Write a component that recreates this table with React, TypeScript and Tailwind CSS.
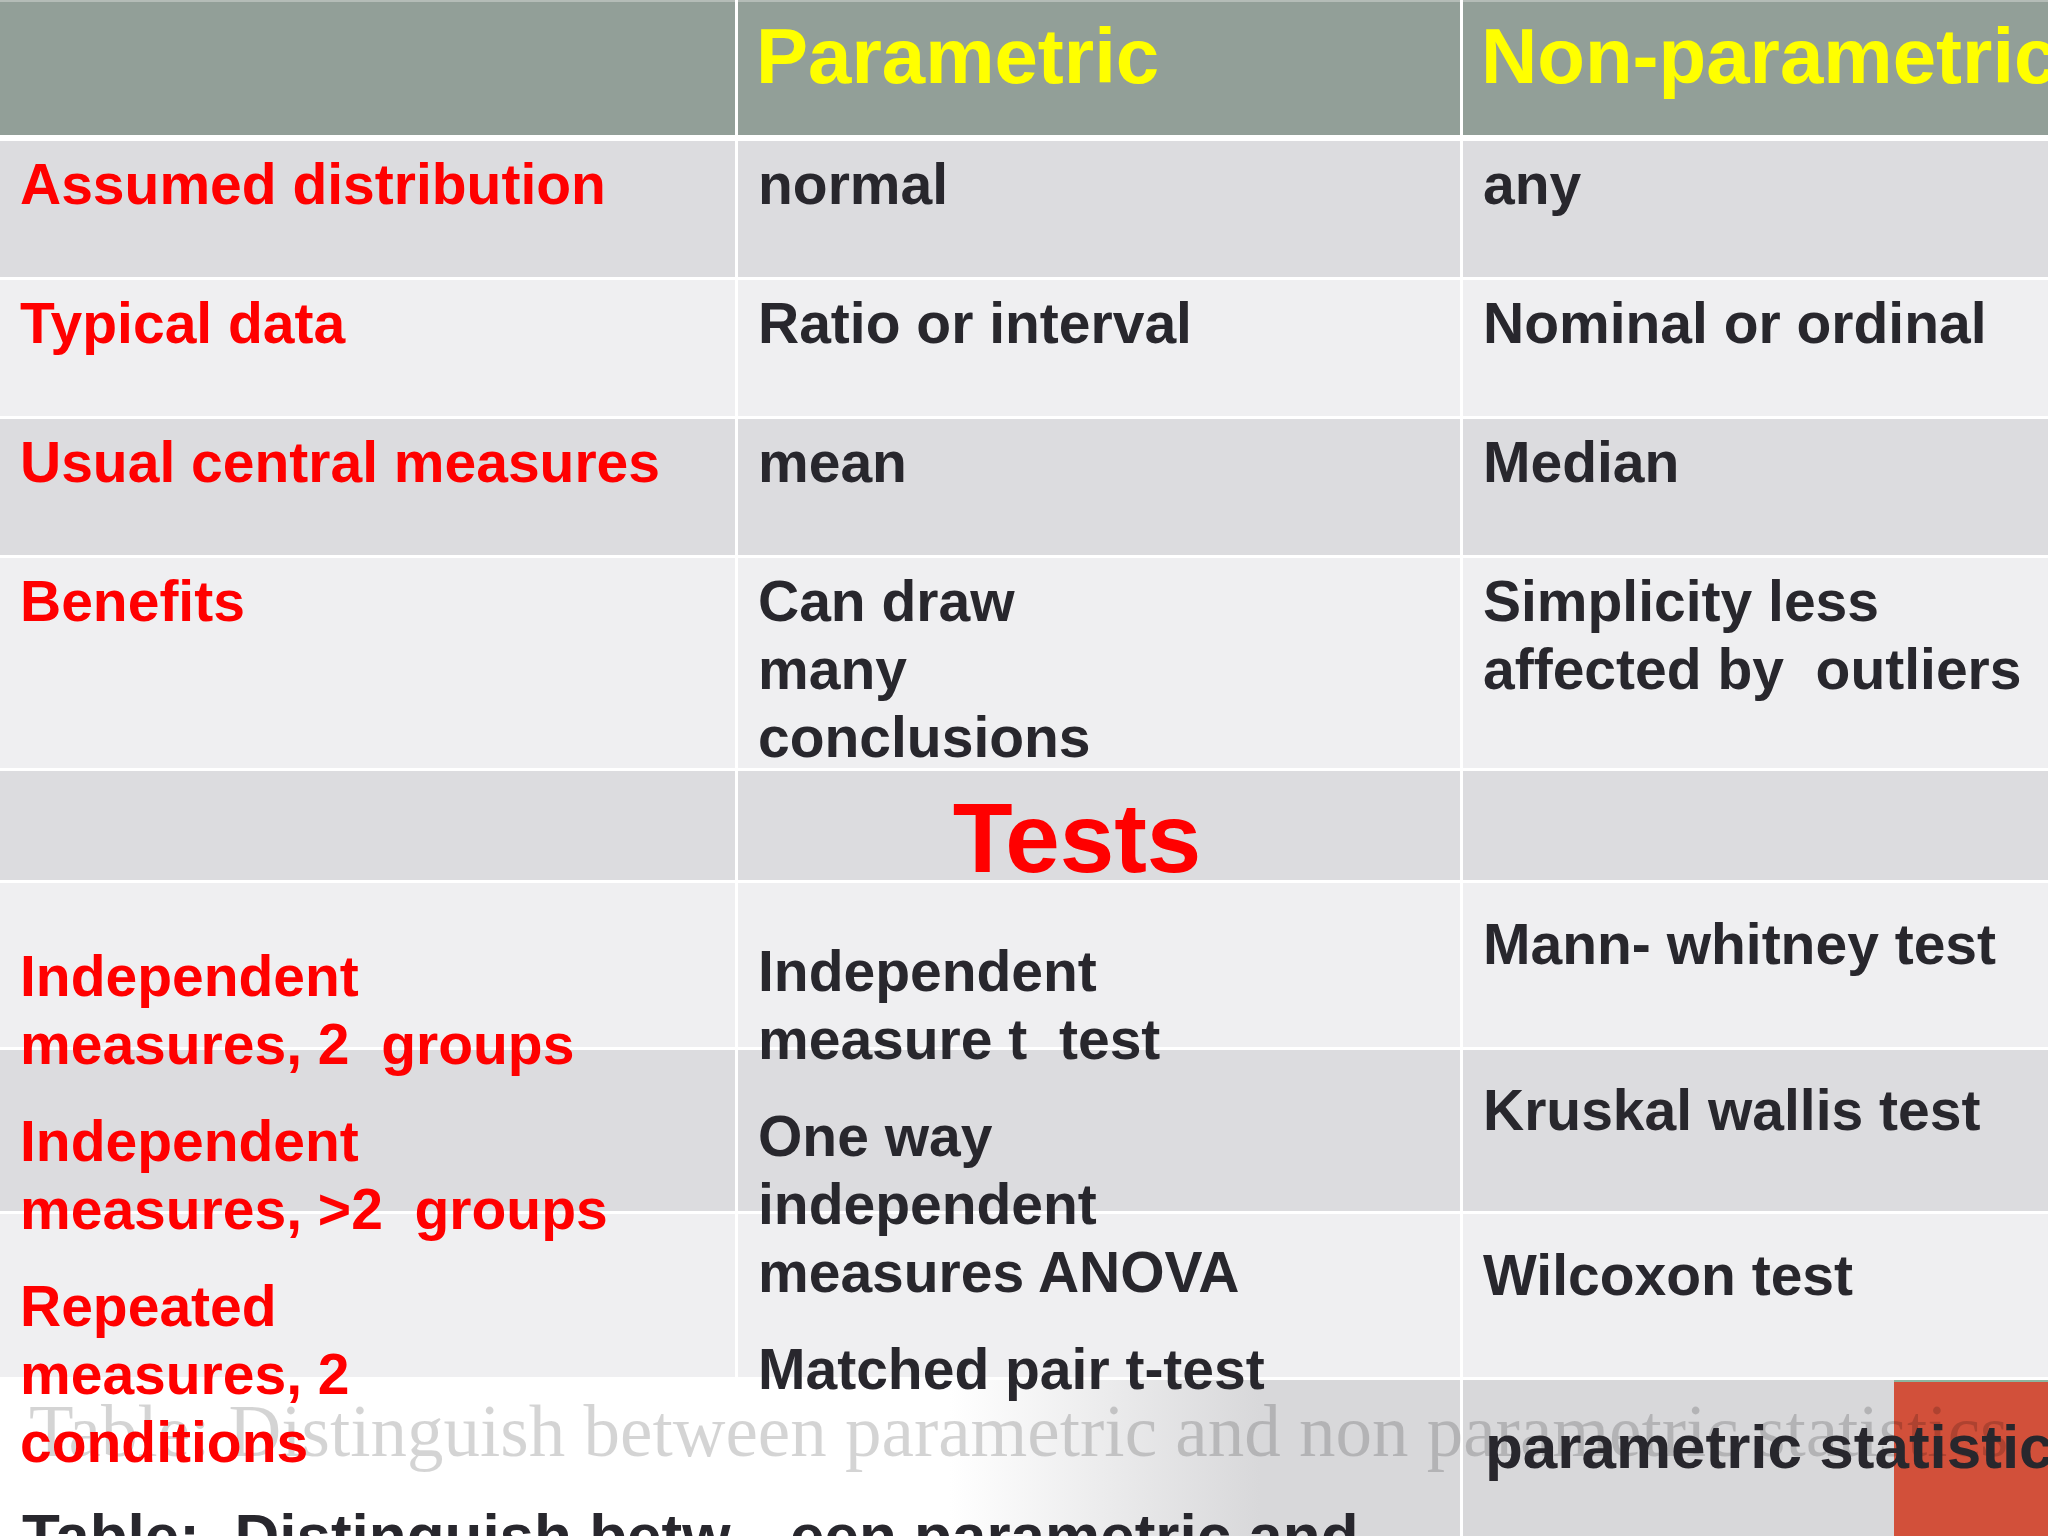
import React from "react";

const DARK = "text-[#28272d]";
const RED = "text-[#ff0000]";

function BodyCell({
  bg,
  color,
  children,
  pt = "pt-[9px]",
}: {
  bg: string;
  color: string;
  children?: React.ReactNode;
  pt?: string;
}) {
  return (
    <div className={`${bg} ${color} ${pt} pl-[20px] text-[57px] leading-[68px] whitespace-pre`}>
      {children}
    </div>
  );
}

export default function App() {
  const dark = "bg-[#dcdcdf]";
  const light = "bg-[#efeff1]";
  return (
    <div className="relative w-[2048px] h-[1536px] overflow-hidden bg-white font-['Liberation_Sans',Arial,sans-serif] font-bold">
      <div className="grid grid-cols-[735px_722px_585px] gap-x-[3px] gap-y-[3px] grid-rows-[138px_136px_136px_136px_210px_109px_164px_161px_163px_156px]">
        {/* Header */}
        <div className="h-[135px] bg-[#929f98] border-t-2 border-[#b4bcb7]" />
        <div className="h-[135px] bg-[#929f98] border-t-2 border-[#b4bcb7] pl-[18px] pt-[15px] text-[78px] leading-none text-[#ffff00] whitespace-nowrap">
          Parametric
        </div>
        <div className="h-[135px] bg-[#929f98] border-t-2 border-[#b4bcb7] pl-[18px] pt-[15px] text-[78px] leading-none text-[#ffff00] whitespace-nowrap">
          Non-parametric
        </div>

        {/* Row 1 */}
        <BodyCell bg={dark} color={RED}>Assumed distribution</BodyCell>
        <BodyCell bg={dark} color={DARK}>normal</BodyCell>
        <BodyCell bg={dark} color={DARK}>any</BodyCell>

        {/* Row 2 */}
        <BodyCell bg={light} color={RED}>Typical data</BodyCell>
        <BodyCell bg={light} color={DARK}>Ratio or interval</BodyCell>
        <BodyCell bg={light} color={DARK}>Nominal or ordinal</BodyCell>

        {/* Row 3 */}
        <BodyCell bg={dark} color={RED}>Usual central measures</BodyCell>
        <BodyCell bg={dark} color={DARK}>mean</BodyCell>
        <BodyCell bg={dark} color={DARK}>Median</BodyCell>

        {/* Row 4 */}
        <BodyCell bg={light} color={RED}>Benefits</BodyCell>
        <BodyCell bg={light} color={DARK}>
          <div>Can draw</div>
          <div>many</div>
          <div>conclusions</div>
        </BodyCell>
        <BodyCell bg={light} color={DARK}>
          <div>Simplicity less</div>
          <div>affected by  outliers</div>
        </BodyCell>

        {/* Tests row */}
        <div className={dark} />
        <div className={`${dark} ${RED} pt-[18px] pr-[44px] text-center text-[98px] leading-none`}>Tests</div>
        <div className={dark} />

        {/* Test rows: backgrounds + column 3 */}
        <div className={`${light} col-start-1 row-start-7`} />
        <div className={`${light} col-start-2 row-start-7`} />
        <div className={`${light} ${DARK} col-start-3 row-start-7 pl-[20px] pt-[27px] text-[57px] leading-[68px] whitespace-pre`}>
          Mann- whitney test
        </div>

        <div className={`${dark} col-start-1 row-start-8`} />
        <div className={`${dark} col-start-2 row-start-8`} />
        <div className={`${dark} ${DARK} col-start-3 row-start-8 pl-[20px] pt-[26px] text-[57px] leading-[68px] whitespace-pre`}>
          Kruskal wallis test
        </div>

        <div className={`${light} col-start-1 row-start-9`} />
        <div className={`${light} col-start-2 row-start-9`} />
        <div className={`${light} ${DARK} col-start-3 row-start-9 pl-[20px] pt-[27px] text-[57px] leading-[68px] whitespace-pre`}>
          Wilcoxon test
        </div>

        {/* Bottom band (caption area) */}
        <div className="col-start-1 col-span-2 row-start-10 bg-[linear-gradient(to_right,#ffffff_950px,#d8d8da_1260px)]" />
        <div className="col-start-3 row-start-10 flex">
          <div className="flex-1 bg-[#d8d8da]" />
          <div className="w-[154px] bg-[#d2503a] border-t-2 border-[#8db59f]" />
        </div>

        {/* Ghost caption */}
        <div className="col-start-1 col-span-3 row-start-10 relative z-10 pl-[29px] pt-[15px] font-['Liberation_Serif','Times_New_Roman',serif] font-normal text-[73px] leading-none text-black/[0.17] whitespace-nowrap blur-[0.6px]">
          Table: Distinguish between parametric and non parametric statistics
        </div>

        {/* Dark caption fragments */}
        <div className={`col-start-1 col-span-2 row-start-10 relative z-20 pl-[22px] pt-[122px] ${DARK} text-[62px] leading-[68px] whitespace-pre`}>
          <span className="inline-block w-[768px]">Table:  Distinguish betw</span>
          <span>een parametric and</span>
        </div>
        <div className={`col-start-3 row-start-10 relative z-20 pl-[22px] pt-[33px] ${DARK} text-[62px] leading-[68px] whitespace-nowrap`}>
          parametric statistic
        </div>

        {/* Column 1 test labels flowing across rows */}
        <div className={`col-start-1 row-start-7 row-span-4 relative z-20 pl-[20px] pt-[59px] ${RED} text-[57px] leading-[68px] whitespace-pre`}>
          <div>Independent</div>
          <div>measures, 2  groups</div>
          <div className="mt-[29px]">Independent</div>
          <div>measures, &gt;2  groups</div>
          <div className="mt-[29px]">Repeated</div>
          <div>measures, 2</div>
          <div>conditions</div>
        </div>

        {/* Column 2 tests flowing across rows */}
        <div className={`col-start-2 row-start-7 row-span-3 relative z-20 pl-[20px] pt-[54px] ${DARK} text-[57px] leading-[68px] whitespace-pre`}>
          <div>Independent</div>
          <div>measure t  test</div>
          <div className="mt-[29px]">One way</div>
          <div>independent</div>
          <div>measures ANOVA</div>
          <div className="mt-[29px]">Matched pair t-test</div>
        </div>
      </div>
    </div>
  );
}
